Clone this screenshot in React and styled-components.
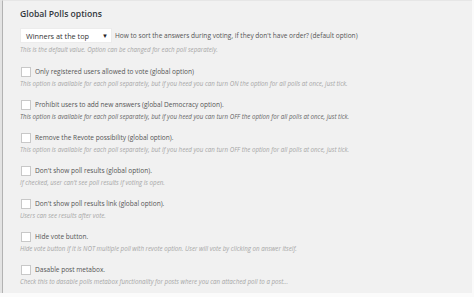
import React from 'react'
import styled, { createGlobalStyle } from 'styled-components'

const GlobalStyle = createGlobalStyle`
    html, body {
        margin: 0;
        padding: 0;
        background: #fbfbfb;
    }
    body {
        width: 474px;
        height: 297px;
        overflow: hidden;
        font-family: "Open Sans", "Liberation Sans", sans-serif;
    }
`

const Frame = styled.div`
    width: 472px;
    height: 293px;
    padding-left: 2px;
    background: #e3e3e3;
    box-sizing: border-box;
    display: flex;
`

const Panel = styled.div`
    flex: 1;
    background: #f1f1f1;
    border-left: 1px solid #b2b2b2;
    border-top: 1px solid #e6e6e6;
    padding: 6px 0 0 17px;
    box-sizing: border-box;
`

const Title = styled.h2`
    margin: 0 0 7px;
    font-size: 8.6px;
    line-height: 14px;
    font-weight: 600;
    color: #32373c;
`

const SelectRow = styled.div`
    display: flex;
    align-items: center;
    gap: 3px;
`

const Select = styled.div`
    width: 92px;
    height: 15px;
    box-sizing: border-box;
    background: #fff;
    border: 1px solid #ececec;
    display: flex;
    align-items: center;
    justify-content: space-between;
    padding: 0 3px 0 5px;
    font-size: 7.3px;
    color: #333;
`

const Arrow = styled.span`
    font-size: 6px;
    color: #222;
`

const Label = styled.span`
    font-size: 6.55px;
    line-height: 12px;
    color: #555;
    white-space: nowrap;
`

const Desc = styled.p`
    margin: ${props => props.first ? '1px 0 0' : '0'};
    font-size: 6.2px;
    line-height: 12px;
    font-style: italic;
    color: ${props => props.dark ? '#666' : '#a6a6a6'};
    white-space: nowrap;
`

const Options = styled.div`
    margin-top: 9.5px;
    display: flex;
    flex-direction: column;
    gap: 9px;
`

const Option = styled.div`
    display: flex;
    flex-direction: column;
`

const CheckRow = styled.label`
    display: flex;
    align-items: center;
    gap: 4px;
    height: 12px;
`

const Box = styled.span`
    width: 10px;
    height: 10px;
    box-sizing: border-box;
    background: #fff;
    border: 1px solid #c8c8c8;
    margin-left: 1px;
`

const options = [
    {
        label: 'Only registered users allowed to vote (global option)',
        desc: 'This option is available for each poll separately, but if you heed you can turn ON the option for all polls at once, just tick.',
    },
    {
        label: 'Prohibit users to add new answers (global Democracy option).',
        desc: 'This option is available for each poll separately, but if you heed you can turn OFF the option for all polls at once, just tick.',
        dark: true,
    },
    {
        label: 'Remove the Revote possibility (global option).',
        desc: 'This option is available for each poll separately, but if you heed you can turn OFF the option for all polls at once, just tick.',
    },
    {
        label: "Don't show poll results (global option).",
        desc: "If checked, user can't see poll results if voting is open.",
    },
    {
        label: "Don't show poll results link (global option).",
        desc: 'Users can see results after vote.',
    },
    {
        label: 'Hide vote button.',
        desc: 'Hide vote button if it is NOT multiple poll with revote option. User will vote by clicking on answer itself.',
    },
    {
        label: 'Dasable post metabox.',
        desc: 'Check this to dasable polls metabox functionality for posts where you can attached poll to a post...',
    },
]

const App = () => {
    return (
        <>
            <GlobalStyle />
            <Frame>
                <Panel>
                    <Title>Global Polls options</Title>
                    <SelectRow>
                        <Select>
                            <span>Winners at the top</span>
                            <Arrow>▼</Arrow>
                        </Select>
                        <Label>How to sort the answers during voting, if they don't have order? (default option)</Label>
                    </SelectRow>
                    <Desc first>This is the default value. Option can be changed for each poll separately.</Desc>
                    <Options>
                        {options.map((o, i) => (
                            <Option key={i}>
                                <CheckRow>
                                    <Box />
                                    <Label>{o.label}</Label>
                                </CheckRow>
                                <Desc dark={o.dark}>{o.desc}</Desc>
                            </Option>
                        ))}
                    </Options>
                </Panel>
            </Frame>
        </>
    )
}

export default App
